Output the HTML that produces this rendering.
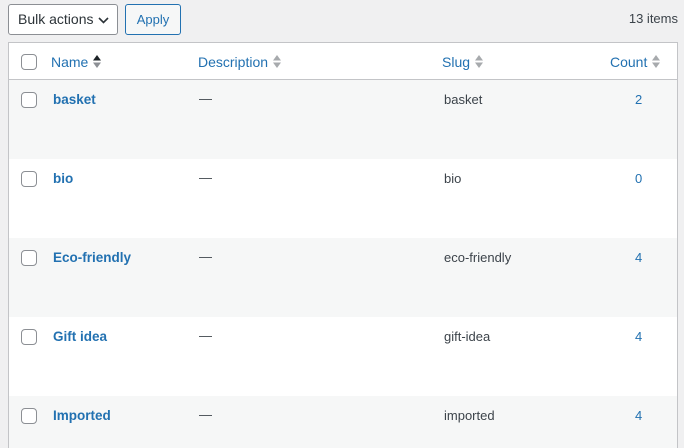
<!DOCTYPE html>
<html style="overflow:hidden;height:448px"><head><style>
body{margin:0;background:#f0f0f1;font-family:"Liberation Sans",Arial,sans-serif;font-size:13px;color:#3c434a;width:684px;height:448px;overflow:hidden;position:relative}
.sel{position:absolute;left:8px;top:4px;width:110px;height:31px;border:1px solid #8c8f94;border-radius:3px;background:#fff;box-sizing:border-box;line-height:29px;padding-left:9px;font-size:14px;color:#2c3338}
.sel svg{position:absolute;right:8px;top:12px}
.btn{position:absolute;left:125px;top:4px;width:56px;height:31px;border:1px solid #2271b1;border-radius:3px;background:#f6f7f7;box-sizing:border-box;line-height:29px;text-align:center;color:#2271b1;font-size:13px}
.items{position:absolute;right:6px;top:11px;font-size:13px;color:#3c434a}
.tbl{position:absolute;left:8px;top:42px;width:670px;height:406px;border:1px solid #c3c4c7;border-bottom:none;box-sizing:border-box;background:#fff;overflow:hidden}
.hd{position:absolute;left:0;top:0;width:668px;height:36px;border-bottom:1px solid #c3c4c7;background:#fff}
.row{position:absolute;left:0;width:668px;height:79px}
.cb{position:absolute;left:12px;width:16px;height:16px;border:1px solid #8c8f94;border-radius:4px;background:#fff;box-sizing:border-box}
.t{position:absolute;white-space:nowrap}
.lnk{color:#2271b1}
.nm{font-weight:bold;color:#2271b1;font-size:13.5px}
.arr{display:inline-block;vertical-align:-2px;margin-left:4px}
</style></head><body>
<div class="sel">Bulk actions<svg width="11" height="7" viewBox="0 0 11 7"><path d="M1 1l4.5 4.5L10 1" stroke="#2c3338" stroke-width="1.6" fill="none"/></svg></div>
<div class="btn">Apply</div>
<div class="items">13 items</div>
<div class="tbl">
<div class="hd">
<div class="cb" style="top:11px"></div>
<div class="t lnk" style="left:42px;top:11px;font-size:14px">Name<svg class="arr" width="10" height="15" viewBox="0 0 10 15"><path d="M5 1L9 6.5H1z" fill="#1d2327"/><path d="M5 14L9 8.5H1z" fill="#8c8f94"/></svg></div>
<div class="t lnk" style="left:189px;top:11px;font-size:14px">Description<svg class="arr" width="10" height="15" viewBox="0 0 10 15"><path d="M5 1L9 6.5H1z" fill="#a7aaad"/><path d="M5 14L9 8.5H1z" fill="#a7aaad"/></svg></div>
<div class="t lnk" style="left:433px;top:11px;font-size:14px">Slug<svg class="arr" width="10" height="15" viewBox="0 0 10 15"><path d="M5 1L9 6.5H1z" fill="#a7aaad"/><path d="M5 14L9 8.5H1z" fill="#a7aaad"/></svg></div>
<div class="t lnk" style="left:601px;top:11px;font-size:14px">Count<svg class="arr" width="10" height="15" viewBox="0 0 10 15"><path d="M5 1L9 6.5H1z" fill="#a7aaad"/><path d="M5 14L9 8.5H1z" fill="#a7aaad"/></svg></div>
</div>
<div class="row" style="top:37px;background:#f6f7f7">
<div class="cb" style="top:12px"></div><div class="t nm" style="left:44px;top:12px">basket</div><div class="t" style="left:190px;top:11px">—</div><div class="t" style="left:435px;top:12px">basket</div><div class="t lnk" style="left:626px;top:12px">2</div></div>
<div class="row" style="top:116px;background:#fff">
<div class="cb" style="top:12px"></div><div class="t nm" style="left:44px;top:12px">bio</div><div class="t" style="left:190px;top:11px">—</div><div class="t" style="left:435px;top:12px">bio</div><div class="t lnk" style="left:626px;top:12px">0</div></div>
<div class="row" style="top:195px;background:#f6f7f7">
<div class="cb" style="top:12px"></div><div class="t nm" style="left:44px;top:12px">Eco-friendly</div><div class="t" style="left:190px;top:11px">—</div><div class="t" style="left:435px;top:12px">eco-friendly</div><div class="t lnk" style="left:626px;top:12px">4</div></div>
<div class="row" style="top:274px;background:#fff">
<div class="cb" style="top:12px"></div><div class="t nm" style="left:44px;top:12px">Gift idea</div><div class="t" style="left:190px;top:11px">—</div><div class="t" style="left:435px;top:12px">gift-idea</div><div class="t lnk" style="left:626px;top:12px">4</div></div>
<div class="row" style="top:353px;height:53px;background:#f6f7f7">
<div class="cb" style="top:12px"></div><div class="t nm" style="left:44px;top:12px">Imported</div><div class="t" style="left:190px;top:11px">—</div><div class="t" style="left:435px;top:12px">imported</div><div class="t lnk" style="left:626px;top:12px">4</div></div>
</div>
</body></html>
